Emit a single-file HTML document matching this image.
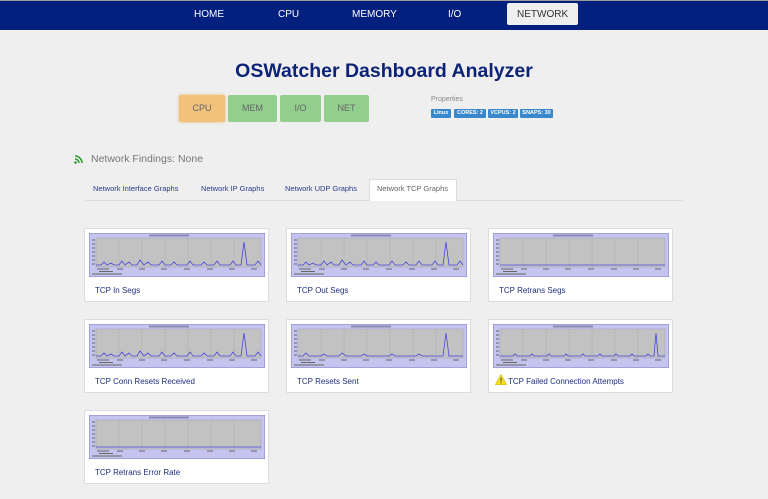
<!DOCTYPE html>
<html><head><meta charset="utf-8"><style>
*{margin:0;padding:0;box-sizing:border-box}
body{width:768px;height:499px;background:#efefef;font-family:"Liberation Sans","DejaVu Sans",sans-serif;position:relative;overflow:hidden}
.nav{position:absolute;left:0;top:0;width:768px;height:30px;background:#04207f;border-top:1px solid #999}
.nav span{position:absolute;top:8px;color:#fff;font-size:10px}
.nav .act{background:#efefef;color:#333;top:2px;height:22px;padding:6px 10px 0;border-radius:2px}
h1{position:absolute;top:60px;left:0;width:768px;text-align:center;font-size:19.5px;color:#0d2378;font-weight:bold}
.btn{position:absolute;top:95px;height:27px;font-size:9px;color:#666;text-align:center;line-height:27px;border-radius:2px}
.prop{position:absolute;left:431px;top:96px;font-size:7px;color:#888}
.bd{position:absolute;top:109px;height:9px;background:#3a88cc;color:#fff;font-size:5.5px;font-weight:bold;line-height:9px;text-align:center;border-radius:1px}
.find{position:absolute;left:91px;top:153px;font-size:10.5px;color:#777}
.tab{position:absolute;top:184px;font-size:7.5px;color:#2a3a8a}
.card{position:absolute;width:185px;height:74px;background:#fff;border:1px solid #ddd}
.card svg{position:absolute;left:4px;top:4px}
.card .t{position:absolute;left:10px;top:57px;font-size:8px;color:#1f2f80}
</style></head><body>
<svg width="0" height="0" style="position:absolute"><defs>
<g id="bg"><rect width="176" height="44" fill="#c4c4ee" stroke="#8080c8"/><rect x="7" y="5" width="165" height="29" fill="#c2c2c2" stroke="#9a9ab0" stroke-width=".4"/>
<path d="M30 5V34M53 5V34M76 5V34M99 5V34M122 5V34M145 5V34" stroke="#a8a8a8" stroke-width=".4"/>
<rect x="60" y="1.5" width="40" height="2" fill="#8a8ab0"/>
<path d="M3 7h3M3 11h3M3 15h3M3 19h3M3 23h3M3 27h3M3 31h3" stroke="#666" stroke-width="1"/>
<path d="M8 36h12M28 36h6M50 36h6M72 36h6M95 36h6M118 36h6M140 36h6M162 36h6M10 38.5h14M3 41h30" stroke="#666" stroke-width="1"/></g>
</defs></svg>
<div class="nav">
<span style="left:194px">HOME</span><span style="left:278px">CPU</span><span style="left:352px">MEMORY</span><span style="left:448px">I/O</span><span class="act" style="left:507px">NETWORK</span>
</div>
<h1>OSWatcher Dashboard Analyzer</h1>
<div class="btn" style="left:179px;width:46px;background:#f0c27c;box-shadow:0 0 3px #e8b870">CPU</div>
<div class="btn" style="left:228px;width:49px;background:#92ce8e">MEM</div>
<div class="btn" style="left:280px;width:41px;background:#92ce8e">I/O</div>
<div class="btn" style="left:324px;width:45px;background:#92ce8e">NET</div>
<div class="prop">Properties</div>
<div class="bd" style="left:431px;width:20px">Linux</div>
<div class="bd" style="left:454px;width:32px">CORES: 2</div>
<div class="bd" style="left:488px;width:30px">VCPUS: 2</div>
<div class="bd" style="left:520px;width:33px">SNAPS: 30</div>
<svg style="position:absolute;left:74px;top:154px" width="10" height="10" viewBox="0 0 10 10"><circle cx="1.5" cy="8.5" r="1.3" fill="#2a9a2a"/><path d="M1 5a4 4 0 0 1 4 4M1 2a7 7 0 0 1 7 7" stroke="#2a9a2a" stroke-width="1.5" fill="none"/></svg>
<div class="find">Network Findings: None</div>
<div style="position:absolute;left:85px;top:200px;width:598px;height:1px;background:#ddd"></div>
<div class="tab" style="left:93px">Network Interface Graphs</div>
<div class="tab" style="left:201px">Network IP Graphs</div>
<div class="tab" style="left:285px">Network UDP Graphs</div>
<div style="position:absolute;left:369px;top:179px;width:88px;height:22px;background:#fff;border:1px solid #ddd;border-bottom:none"></div>
<div class="tab" style="left:377px;color:#666">Network TCP Graphs</div>

<div class="card" style="left:84px;top:228px"><svg width="176" height="44"><use href="#bg"/><polyline fill="none" stroke="#4646e0" stroke-width="0.8" points="7,32 12,32 15,29 18,32 22,30 25,32 30,32 33,28 36,32 40,29 43,32 48,32 51,27 55,32 59,29 62,32 70,32 73,28 76,32 82,32 85,29 88,32 98,32 101,28 104,32 112,32 115,29 118,32 125,32 128,28 131,32 141,32 144,28 147,32 152,32 155,9 158,32 166,32 169,28 172,32"/></svg><div class="t">TCP In Segs</div></div>
<div class="card" style="left:286px;top:228px"><svg width="176" height="44"><use href="#bg"/><polyline fill="none" stroke="#4646e0" stroke-width="0.8" points="7,32 12,32 15,29 18,32 22,30 25,32 30,32 33,28 36,32 40,29 43,32 48,32 51,27 55,32 59,29 62,32 70,32 73,28 76,32 82,32 85,29 88,32 98,32 101,28 104,32 112,32 115,29 118,32 125,32 128,28 131,32 141,32 144,28 147,32 152,32 155,9 158,32 166,32 169,28 172,32"/></svg><div class="t">TCP Out Segs</div></div>
<div class="card" style="left:488px;top:228px"><svg width="176" height="44"><use href="#bg"/><polyline fill="none" stroke="#4646e0" stroke-width="0.8" points="7,32 172,32"/></svg><div class="t">TCP Retrans Segs</div></div>

<div class="card" style="left:84px;top:319px"><svg width="176" height="44"><use href="#bg"/><polyline fill="none" stroke="#4646e0" stroke-width="0.8" points="7,32 12,32 15,29 18,32 22,30 25,32 30,32 33,28 36,32 40,29 43,32 48,32 51,27 55,32 59,29 62,32 70,32 73,28 76,32 82,32 85,29 88,32 98,32 101,28 104,32 112,32 115,29 118,32 125,32 128,28 131,32 141,32 144,28 147,32 152,32 155,9 158,32 166,32 169,28 172,32"/></svg><div class="t">TCP Conn Resets Received</div></div>
<div class="card" style="left:286px;top:319px"><svg width="176" height="44"><use href="#bg"/><polyline fill="none" stroke="#4646e0" stroke-width="0.8" points="7,32 12,32 15,29 18,32 30,32 33,30 36,32 48,32 51,29 55,32 70,32 73,30 76,32 98,32 101,30 104,32 125,32 128,30 131,32 152,32 155,9 158,32 172,32"/></svg><div class="t">TCP Resets Sent</div></div>
<div class="card" style="left:488px;top:319px"><svg width="176" height="44"><use href="#bg"/><polyline fill="none" stroke="#4646e0" stroke-width="0.8" points="7,32 20,32 22,30 24,32 37,32 39,30 41,32 54,32 56,30 58,32 71,32 73,30 75,32 88,32 90,30 92,32 105,32 107,30 109,32 121,32 123,30 125,32 137,32 139,30 141,32 153,32 155,30 157,32 161,32 163,9 165,32 172,32"/></svg><svg style="left:6px;top:54px" width="12" height="11" viewBox="0 0 12 11"><path d="M6 .5 11.5 10.5H.5Z" fill="#f5e020" stroke="#d8b800" stroke-width=".7"/><rect x="5.5" y="3.5" width="1" height="4" fill="#444"/><rect x="5.5" y="8.3" width="1" height="1" fill="#444"/></svg><div class="t" style="left:19px">TCP Failed Connection Attempts</div></div>

<div class="card" style="left:84px;top:410px"><svg width="176" height="44"><use href="#bg"/><polyline fill="none" stroke="#4646e0" stroke-width="0.8" points="7,32 172,32"/></svg><div class="t">TCP Retrans Error Rate</div></div>
</body></html>
